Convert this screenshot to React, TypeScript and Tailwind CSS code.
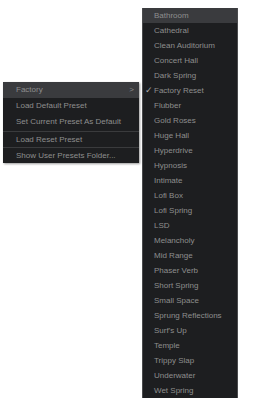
import React from "react";

const presets = [
  "Bathroom",
  "Cathedral",
  "Clean Auditorium",
  "Concert Hall",
  "Dark Spring",
  "Factory Reset",
  "Flubber",
  "Gold Roses",
  "Huge Hall",
  "Hyperdrive",
  "Hypnosis",
  "Intimate",
  "Lofi Box",
  "Lofi Spring",
  "LSD",
  "Melancholy",
  "Mid Range",
  "Phaser Verb",
  "Short Spring",
  "Small Space",
  "Sprung Reflections",
  "Surf's Up",
  "Temple",
  "Trippy Slap",
  "Underwater",
  "Wet Spring",
];

export default function App() {
  return (
    <div
      className="w-[259px] h-[420px] bg-white flex flex-row items-start pl-[3px] gap-[3px] text-[8px] text-[#8e8e8e] overflow-hidden"
      style={{ fontFamily: '"Liberation Sans", Arial, sans-serif' }}
    >
      <div className="mt-[82px] w-[136px] bg-[#1d1e20] flex flex-col shadow-[1px_1px_2px_rgba(0,0,0,0.4)]">
        <div className="h-[16px] bg-[#3a3b3e] flex items-center pl-[13px] pr-[5px] justify-between">
          <span>Factory</span>
          <span className="text-[#8a8a8a]">&gt;</span>
        </div>
        <div className="h-[16px] flex items-center pl-[13px]">Load Default Preset</div>
        <div className="h-[16px] flex items-center pl-[13px]">Set Current Preset As Default</div>
        <div className="h-[1px] bg-[#3a3b3d] mt-[1px]" />
        <div className="h-[15px] flex items-center pl-[13px]">Load Reset Preset</div>
        <div className="h-[1px] bg-[#3a3b3d]" />
        <div className="h-[15px] flex items-center pl-[13px]">Show User Presets Folder...</div>
      </div>
      <div className="mt-[8px] w-[96px] bg-[#1d1e20] border-x border-[#4a4b4d] flex flex-col">
        {presets.map((p, i) => (
          <div
            key={p}
            className={
              "h-[15px] flex items-center pl-[11px] relative " +
              (i === 0 ? "bg-[#3a3b3e]" : "")
            }
          >
            {p === "Factory Reset" && (
              <span className="absolute left-[2px] text-[9px] text-[#a8a8a8]">✓</span>
            )}
            <span className="whitespace-nowrap">{p}</span>
          </div>
        ))}
      </div>
    </div>
  );
}
